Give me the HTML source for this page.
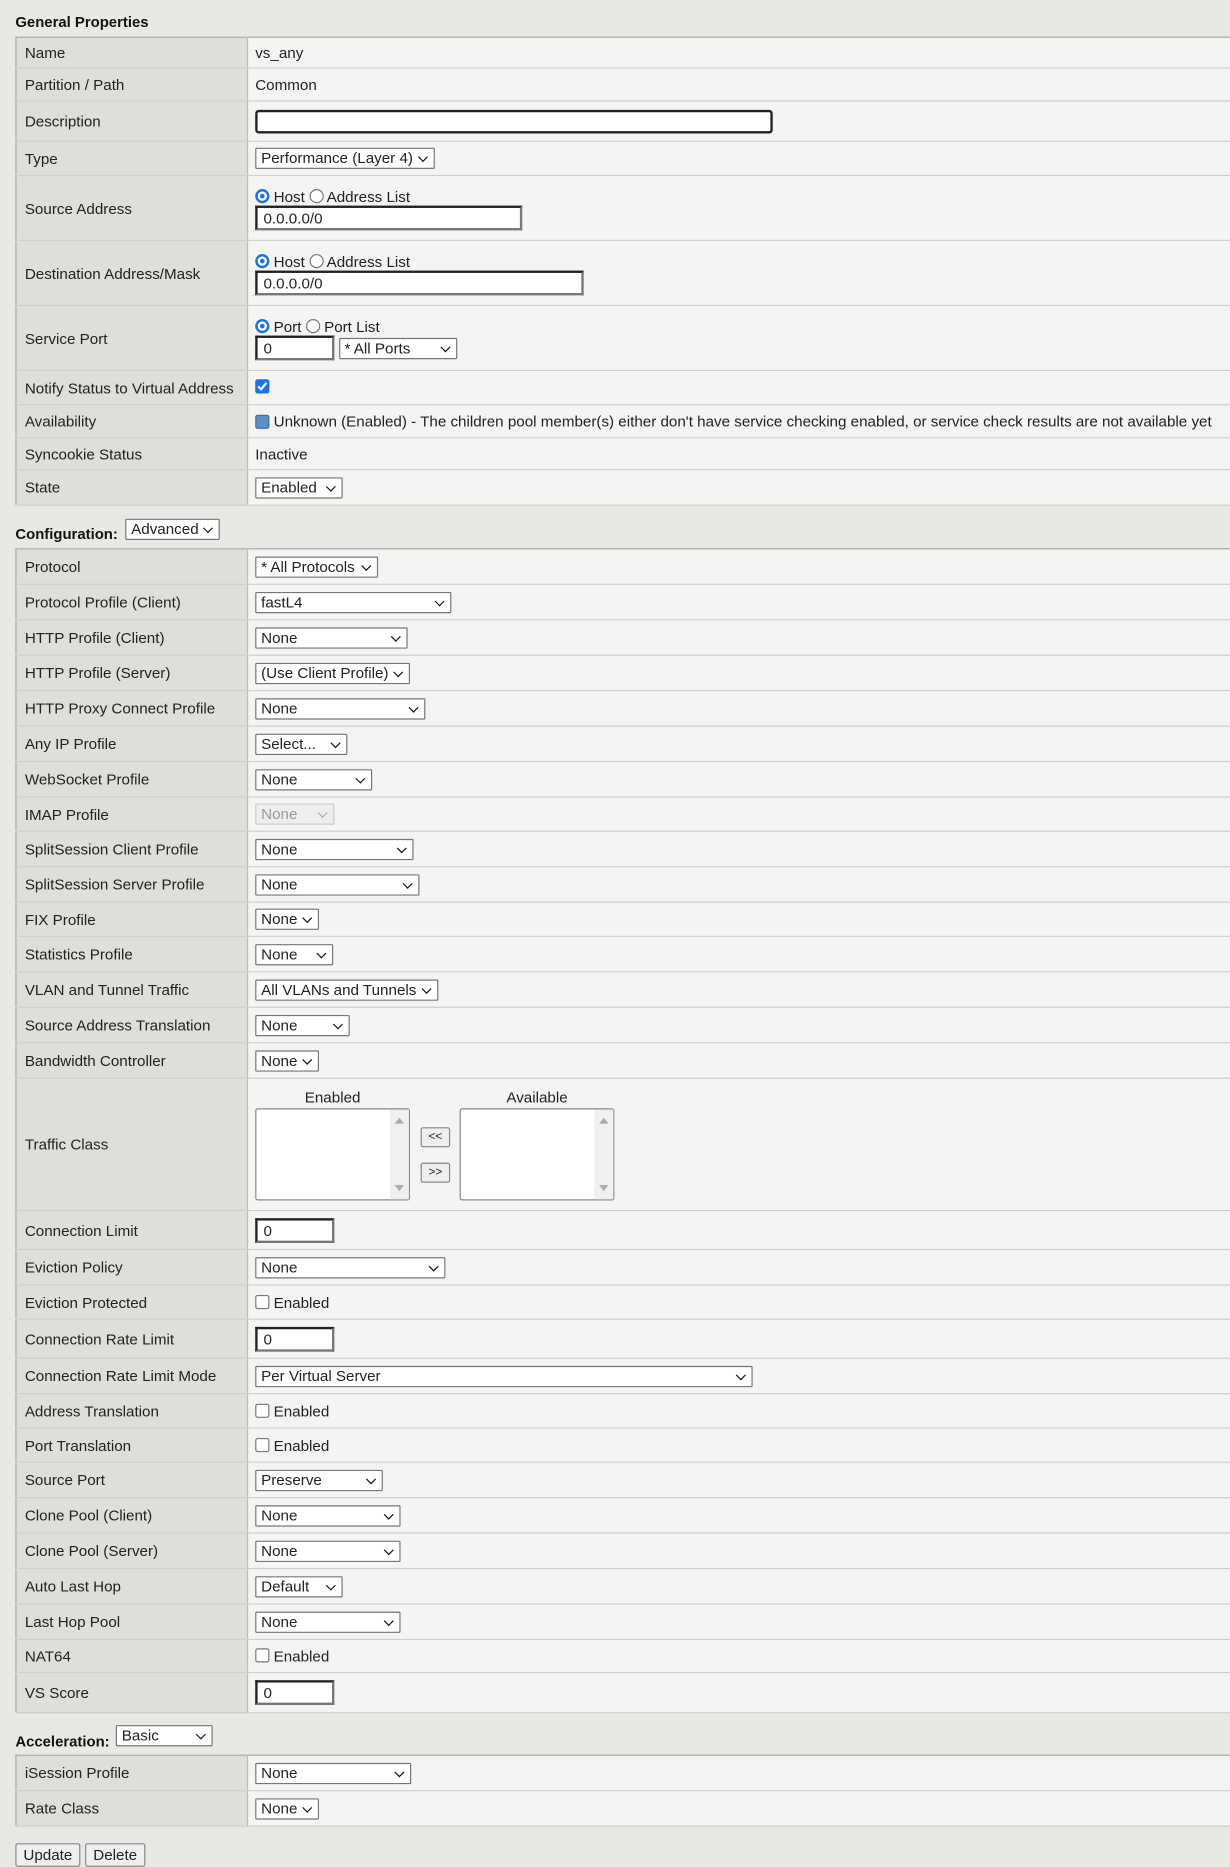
<!DOCTYPE html>
<html><head><meta charset="utf-8">
<style>
html,body{margin:0;padding:0;background:#e9e8e5;width:1230px;height:1853px;overflow:hidden}
#w{position:absolute;left:0;top:0;width:1041px;height:1568px;transform:scale(1.18156);transform-origin:0 0;font-family:"Liberation Sans",Arial,sans-serif;font-size:12.85px;color:#222}
.h{position:absolute;left:13px;font-weight:bold;font-size:12.6px;color:#111}
table{position:absolute;left:13px;width:1040px;border-collapse:collapse;border:1px solid #a9a9a9;border-right:none}
td{border-bottom:1px solid #cfcfcf;padding:0 0 0 8px;vertical-align:middle}
td.l{width:188px;background:#dfdedb;border-right:1px solid #bcbcbc;padding-left:7px}
td.v{background:#f5f4f2;padding-left:6px}
.sel{display:inline-block;position:relative;box-sizing:border-box;height:18px;border:1px solid #767676;background:#fff;padding-left:4px;line-height:16px;vertical-align:middle;border-radius:1px}
.sel:after{content:"";position:absolute;right:6px;top:4px;width:5px;height:5px;border-right:1.6px solid #111;border-bottom:1.6px solid #111;transform:rotate(45deg)}
.sel.dis{color:#999;border-color:#ccc;background:#eee}
.sel.dis:after{border-color:#aaa}
.inp{display:inline-block;box-sizing:border-box;height:21px;border:2px solid #222;border-right-color:#777;border-bottom-color:#777;background:#fff;padding-left:5px;line-height:17px;vertical-align:middle}
.rad{display:inline-block;width:12px;height:12px;border-radius:50%;border:1px solid #777;background:#fff;vertical-align:-1px;box-sizing:border-box}
.rad.on{border:2px solid #1a73e8;box-shadow:inset 0 0 0 2px #fff;background:#1a73e8}
.cb{display:inline-block;width:12px;height:12px;border:1px solid #777;border-radius:2px;background:#fff;box-sizing:border-box;vertical-align:-1px}
.lb{display:inline-block;box-sizing:border-box;border:1px solid #888;border-radius:2px;background:#fff;width:131px;height:78px;position:relative}
.lb i{position:absolute;right:0;top:0;width:16px;height:76px;background:#f0f0f0}
.lb i:before,.lb i:after{content:"";position:absolute;left:4px;border-left:4px solid transparent;border-right:4px solid transparent}
.lb i:before{top:7px;border-bottom:5px solid #aaa}
.lb i:after{bottom:7px;border-top:5px solid #aaa}
.btn{display:inline-block;box-sizing:border-box;width:25px;height:17px;border:1px solid #888;border-radius:2px;background:#efefef;font-size:10px;text-align:center;line-height:15px}
</style></head><body><div id="w">
<div class="h" style="top:12px">General Properties</div>
<table style="top:31px;height:397px">
<tr style="height:26px"><td class="l">Name</td><td class="v">vs_any</td></tr>
<tr style="height:28px"><td class="l">Partition / Path</td><td class="v">Common</td></tr>
<tr style="height:34px"><td class="l">Description</td><td class="v"><span class="inp" style="width:438px;height:20px;border-radius:3px;border-color:#222"></span></td></tr>
<tr style="height:29px"><td class="l">Type</td><td class="v"><span class="sel" style="width:152px">Performance (Layer 4)</span></td></tr>
<tr style="height:55px"><td class="l">Source Address</td><td class="v"><div style="margin-top:2px"><span class="rad on"></span> Host <span class="rad"></span> Address List</div><span class="inp" style="width:226px">0.0.0.0/0</span></td></tr>
<tr style="height:55px"><td class="l">Destination Address/Mask</td><td class="v"><div style="margin-top:2px"><span class="rad on"></span> Host <span class="rad"></span> Address List</div><span class="inp" style="width:278px">0.0.0.0/0</span></td></tr>
<tr style="height:55px"><td class="l">Service Port</td><td class="v"><div style="margin-top:2px"><span class="rad on"></span> Port <span class="rad"></span> Port List</div><span class="inp" style="width:67px">0</span> <span class="sel" style="width:100px">* All Ports</span></td></tr>
<tr style="height:29px"><td class="l">Notify Status to Virtual Address</td><td class="v" style="vertical-align:top;padding-top:6px"><span class="cb" style="background:#1a73e8;border-color:#1a73e8;position:relative"><svg width="12" height="12" style="position:absolute;left:-1px;top:-1px"><path d="M2.5 6 L5 8.5 L9.5 3" stroke="#fff" stroke-width="1.8" fill="none"/></svg></span></td></tr>
<tr style="height:28px"><td class="l">Availability</td><td class="v"><span style="display:inline-block;width:12px;height:12px;background:#5b8fc9;border:1px solid #3d6ea8;border-radius:2px;vertical-align:-2px;box-sizing:border-box"></span> Unknown (Enabled) - The children pool member(s) either don't have service checking enabled, or service check results are not available yet</td></tr>
<tr style="height:27px"><td class="l">Syncookie Status</td><td class="v">Inactive</td></tr>
<tr style="height:30px"><td class="l">State</td><td class="v"><span class="sel" style="width:74px">Enabled</span></td></tr>
</table>
<div class="h" style="top:445px">Configuration:</div>
<span class="sel" style="position:absolute;left:106px;top:439px;width:80px">Advanced</span>
<table style="top:464px;height:985px">
<tr style="height:30px"><td class="l">Protocol</td><td class="v"><span class="sel" style="width:104px">* All Protocols</span></td></tr>
<tr style="height:30px"><td class="l">Protocol Profile (Client)</td><td class="v"><span class="sel" style="width:166px">fastL4</span></td></tr>
<tr style="height:30px"><td class="l">HTTP Profile (Client)</td><td class="v"><span class="sel" style="width:129px">None</span></td></tr>
<tr style="height:30px"><td class="l">HTTP Profile (Server)</td><td class="v"><span class="sel" style="width:131px">(Use Client Profile)</span></td></tr>
<tr style="height:30px"><td class="l">HTTP Proxy Connect Profile</td><td class="v"><span class="sel" style="width:144px">None</span></td></tr>
<tr style="height:30px"><td class="l">Any IP Profile</td><td class="v"><span class="sel" style="width:78px">Select...</span></td></tr>
<tr style="height:30px"><td class="l">WebSocket Profile</td><td class="v"><span class="sel" style="width:99px">None</span></td></tr>
<tr style="height:29px"><td class="l">IMAP Profile</td><td class="v"><span class="sel dis" style="width:67px">None</span></td></tr>
<tr style="height:30px"><td class="l">SplitSession Client Profile</td><td class="v"><span class="sel" style="width:134px">None</span></td></tr>
<tr style="height:30px"><td class="l">SplitSession Server Profile</td><td class="v"><span class="sel" style="width:139px">None</span></td></tr>
<tr style="height:29px"><td class="l">FIX Profile</td><td class="v"><span class="sel" style="width:54px">None</span></td></tr>
<tr style="height:30px"><td class="l">Statistics Profile</td><td class="v"><span class="sel" style="width:66px">None</span></td></tr>
<tr style="height:30px"><td class="l">VLAN and Tunnel Traffic</td><td class="v"><span class="sel" style="width:155px">All VLANs and Tunnels</span></td></tr>
<tr style="height:30px"><td class="l">Source Address Translation</td><td class="v"><span class="sel" style="width:80px">None</span></td></tr>
<tr style="height:30px"><td class="l">Bandwidth Controller</td><td class="v"><span class="sel" style="width:54px">None</span></td></tr>
<tr style="height:111px"><td class="l">Traffic Class</td><td class="v" style="position:relative">
<div style="position:relative;height:111px">
<div style="position:absolute;left:0;top:8px;width:131px;text-align:center">Enabled</div>
<div style="position:absolute;left:173px;top:8px;width:131px;text-align:center">Available</div>
<span class="lb" style="position:absolute;left:0;top:25px"><i></i></span>
<span class="btn" style="position:absolute;left:140px;top:41px">&lt;&lt;</span>
<span class="btn" style="position:absolute;left:140px;top:71px">&gt;&gt;</span>
<span class="lb" style="position:absolute;left:173px;top:25px"><i></i></span>
</div></td></tr>
<tr style="height:33px"><td class="l">Connection Limit</td><td class="v"><span class="inp" style="width:67px">0</span></td></tr>
<tr style="height:30px"><td class="l">Eviction Policy</td><td class="v"><span class="sel" style="width:161px">None</span></td></tr>
<tr style="height:29px"><td class="l">Eviction Protected</td><td class="v"><span class="cb"></span> Enabled</td></tr>
<tr style="height:33px"><td class="l">Connection Rate Limit</td><td class="v"><span class="inp" style="width:67px">0</span></td></tr>
<tr style="height:30px"><td class="l">Connection Rate Limit Mode</td><td class="v"><span class="sel" style="width:421px">Per Virtual Server</span></td></tr>
<tr style="height:29px"><td class="l">Address Translation</td><td class="v"><span class="cb"></span> Enabled</td></tr>
<tr style="height:29px"><td class="l">Port Translation</td><td class="v"><span class="cb"></span> Enabled</td></tr>
<tr style="height:30px"><td class="l">Source Port</td><td class="v"><span class="sel" style="width:108px">Preserve</span></td></tr>
<tr style="height:30px"><td class="l">Clone Pool (Client)</td><td class="v"><span class="sel" style="width:123px">None</span></td></tr>
<tr style="height:30px"><td class="l">Clone Pool (Server)</td><td class="v"><span class="sel" style="width:123px">None</span></td></tr>
<tr style="height:30px"><td class="l">Auto Last Hop</td><td class="v"><span class="sel" style="width:74px">Default</span></td></tr>
<tr style="height:30px"><td class="l">Last Hop Pool</td><td class="v"><span class="sel" style="width:123px">None</span></td></tr>
<tr style="height:28px"><td class="l">NAT64</td><td class="v"><span class="cb"></span> Enabled</td></tr>
<tr style="height:34px"><td class="l">VS Score</td><td class="v"><span class="inp" style="width:67px">0</span></td></tr>
</table>
<div class="h" style="top:1467px">Acceleration:</div>
<span class="sel" style="position:absolute;left:98px;top:1460px;width:82px">Basic</span>
<table style="top:1485px;height:61px">
<tr style="height:30px"><td class="l">iSession Profile</td><td class="v"><span class="sel" style="width:132px">None</span></td></tr>
<tr style="height:30px"><td class="l">Rate Class</td><td class="v"><span class="sel" style="width:54px">None</span></td></tr>
</table>
<span style="position:absolute;left:13px;top:1560px;width:55px;height:20px;border:1px solid #888;border-radius:2px;background:#efefef;box-sizing:border-box;text-align:center;line-height:18px">Update</span>
<span style="position:absolute;left:72px;top:1560px;width:51px;height:20px;border:1px solid #888;border-radius:2px;background:#efefef;box-sizing:border-box;text-align:center;line-height:18px">Delete</span>
</div></body></html>
